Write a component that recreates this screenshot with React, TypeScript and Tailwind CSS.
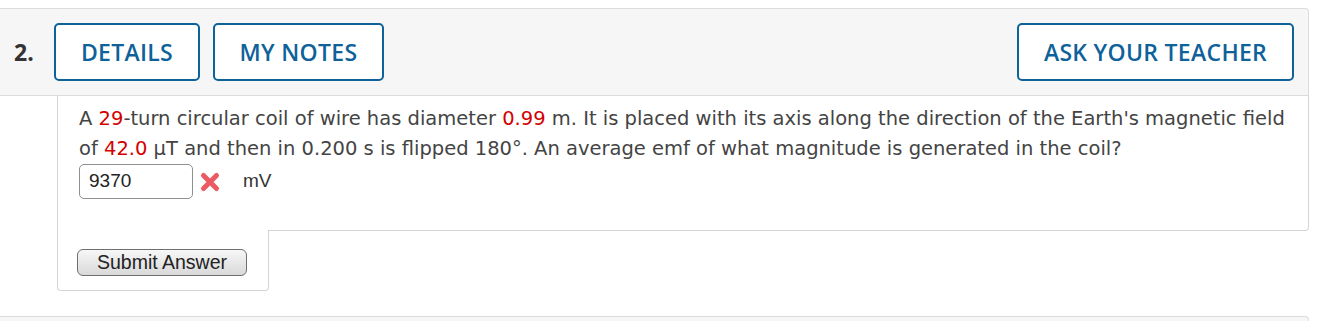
import React from "react";

function WrongMark() {
  return (
    <svg width="22" height="22" viewBox="0 0 22 22" className="shrink-0">
      <path d="M4.5 4.5 L17.5 17.5 M17.5 4.5 L4.5 17.5" stroke="#ec5a63" strokeWidth="5" strokeLinecap="round" />
    </svg>
  );
}

function HeaderButton({ label, width }: { label: string; width: string }) {
  return (
    <button
      type="button"
      className={`${width} h-[58px] rounded-[5px] border-2 border-[#0e6299] bg-white text-[23px] font-semibold text-[#0e6299] tracking-[0.3px]`}
      style={{ fontFamily: '"Open Sans", "Liberation Sans", sans-serif' }}
    >
      {label}
    </button>
  );
}

export default function App() {
  return (
    <div className="w-[1333px] h-[321px] bg-white overflow-hidden pt-2">
      {/* Question header */}
      <div className="w-[1309px] bg-[#f6f6f6] border-t border-r border-b border-[#dcdcdc] rounded-tr-[4px] flex items-center py-[14px] pl-[14px] pr-[14px]">
        <span
          className="text-[23px] font-bold text-[#333] w-[40px]"
          style={{ fontFamily: '"Open Sans", "Liberation Sans", sans-serif' }}
        >
          2.
        </span>
        <div className="flex gap-[13px]">
          <HeaderButton label="DETAILS" width="w-[146px]" />
          <HeaderButton label="MY NOTES" width="w-[171px]" />
        </div>
        <div className="ml-auto">
          <HeaderButton label="ASK YOUR TEACHER" width="w-[277px]" />
        </div>
      </div>

      {/* Question body */}
      <div className="ml-[57px] w-[1252px]">
        <div className="border-l border-r border-b border-[#d4d4d4] rounded-br-[4px] pl-[21px] pr-[20px] pt-[8px] pb-[31px] bg-white">
          <p
            className="text-[19.5px] leading-[30px] text-[#444]"
            style={{ fontFamily: '"DejaVu Sans", Verdana, sans-serif' }}
          >
            A <span className="text-[#d40000]">29</span>-turn circular coil of wire has diameter{" "}
            <span className="text-[#d40000]">0.99</span> m. It is placed with its axis along the direction of the Earth's magnetic field of{" "}
            <span className="text-[#d40000]">42.0</span> µT and then in 0.200 s is flipped 180°. An average emf of what magnitude is generated in the coil?
          </p>
          <div
            className="flex items-center h-[35px]"
            style={{ fontFamily: '"Liberation Sans", Arial, sans-serif' }}
          >
            <div className="w-[114px] h-[35px] border border-[#8f8f8f] rounded-[5px] flex items-center pl-[9px] text-[19px] text-[#222]">
              9370
            </div>
            <div className="ml-[6px]">
              <WrongMark />
            </div>
            <span className="ml-[22px] text-[19px] text-[#333]">mV</span>
          </div>
        </div>
        <div className="-mt-px w-[212px] h-[61px] bg-white border-l border-r border-b border-[#d4d4d4] rounded-b-[4px] pl-[19px] pt-[19px]">
          <button
            type="button"
            className="w-[170px] h-[27px] rounded-[6px] border border-[#6f6f6f] bg-gradient-to-b from-[#f7f7f7] to-[#d9d9d9] text-[19.5px] text-[#222] leading-none"
            style={{ fontFamily: '"Liberation Sans", Arial, sans-serif' }}
          >
            Submit Answer
          </button>
        </div>
      </div>

      {/* Next question header */}
      <div className="mt-[25px] w-[1309px] h-[40px] bg-[#f6f6f6] border-t border-r border-[#dcdcdc] rounded-tr-[4px]" />
    </div>
  );
}
